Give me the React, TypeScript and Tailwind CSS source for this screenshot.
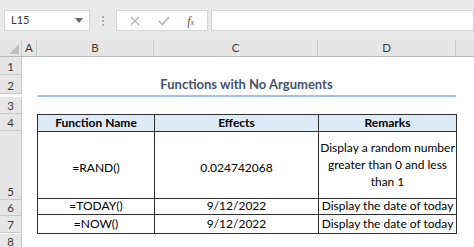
import React from "react";

const font = { fontFamily: "Lato, 'Open Sans', sans-serif" };

function RowHead({ n, h }: { n: string; h: string }) {
  return (
    <div
      className={`w-[22px] shrink-0 ${h} bg-[#e6e6e6] border-r border-b border-[#c9c9c9] flex items-end justify-center text-[11.5px] leading-[15px] text-[#3b3b3b]`}
    >
      {n}
    </div>
  );
}

export default function App() {
  return (
    <div className="w-[474px] h-[247px] overflow-hidden bg-white" style={font}>
      {/* formula bar */}
      <div className="h-[40px] bg-[#e9e9e9] pt-[10px] flex">
        <div className="ml-[4px] w-[86px] h-[21px] bg-white border border-[#d4d4d4] flex items-center justify-between px-[6px] text-[11px] text-[#333]">
          <span>L15</span>
          <svg width="8" height="5" viewBox="0 0 8 5">
            <path d="M0 0 L8 0 L4 5 Z" fill="#666" />
          </svg>
        </div>
        <div className="w-[26px] h-[21px] flex flex-col items-center justify-center gap-[2px]">
          <span className="w-[2px] h-[2px] bg-[#aaa]" />
          <span className="w-[2px] h-[2px] bg-[#aaa]" />
          <span className="w-[2px] h-[2px] bg-[#aaa]" />
        </div>
        <div className="w-[92px] h-[21px] bg-white border border-[#d4d4d4] flex items-center justify-around px-[4px]">
          <svg width="10" height="10" viewBox="0 0 10 10">
            <path d="M1 1 L9 9 M9 1 L1 9" stroke="#b4b4b4" strokeWidth="1.4" />
          </svg>
          <svg width="12" height="10" viewBox="0 0 12 10">
            <path d="M1 5 L4.5 8.5 L11 1" stroke="#b4b4b4" strokeWidth="1.6" fill="none" />
          </svg>
          <span
            className="text-[12px] italic text-[#555] leading-none"
            style={{ fontFamily: "'Liberation Serif', serif" }}
          >
            f<span className="text-[8px]">x</span>
          </span>
        </div>
        <div className="ml-[3px] flex-1 h-[21px] bg-white border border-[#d4d4d4]" />
      </div>

      {/* column headers */}
      <div className="h-[17px] flex bg-[#e6e6e6] border-b border-[#b9b9b9] text-[11.5px] text-[#3b3b3b]">
        <div className="w-[22px] shrink-0 border-r border-[#c9c9c9] flex items-end justify-end p-[2px]">
          <svg width="10" height="10" viewBox="0 0 10 10">
            <path d="M10 0 L10 10 L0 10 Z" fill="#bdbdbd" />
          </svg>
        </div>
        <div className="w-[15px] shrink-0 border-r border-[#c9c9c9] flex items-center justify-center">A</div>
        <div className="w-[117px] shrink-0 border-r border-[#c9c9c9] flex items-center justify-center">B</div>
        <div className="w-[164px] shrink-0 border-r border-[#c9c9c9] flex items-center justify-center">C</div>
        <div className="w-[138px] shrink-0 border-r border-[#c9c9c9] flex items-center justify-center">D</div>
        <div className="flex-1" />
      </div>

      {/* row 1 */}
      <div className="flex">
        <RowHead n="1" h="h-[18px]" />
      </div>
      {/* row 2 */}
      <div className="flex">
        <RowHead n="2" h="h-[19px]" />
        <div className="ml-[15px] w-[419px] border-b-2 border-[#9dc3e6] flex items-center justify-center text-[13px] font-bold text-[#44546a]">
          Functions with No Arguments
        </div>
      </div>
      {/* row 3 */}
      <div className="flex">
        <RowHead n="3" h="h-[17px]" />
      </div>
      {/* table */}
      <div className="flex text-[12px] text-black">
        <div className="flex flex-col">
          <RowHead n="4" h="h-[17px]" />
          <RowHead n="5" h="h-[69px]" />
          <RowHead n="6" h="h-[16px]" />
          <RowHead n="7" h="h-[17px]" />
        </div>
        <div className="ml-[15px] w-[420px] h-[120px] border border-[#2e2e2e] flex flex-col">
          <div className="h-[17px] flex bg-[#ddebf7] border-b border-[#2e2e2e] font-bold">
            <div className="w-[117px] border-r border-[#2e2e2e] flex items-center justify-center">Function Name</div>
            <div className="w-[164px] border-r border-[#2e2e2e] flex items-center justify-center">Effects</div>
            <div className="flex-1 flex items-center justify-center">Remarks</div>
          </div>
          <div className="h-[69px] flex border-b border-[#2e2e2e]">
            <div className="w-[117px] border-r border-[#2e2e2e] flex items-center justify-center pt-[6px]">=RAND()</div>
            <div className="w-[164px] border-r border-[#2e2e2e] flex items-center justify-center pt-[6px]">0.024742068</div>
            <div className="flex-1 flex items-center justify-center text-center leading-[17px] whitespace-nowrap">
              Display a random number
              <br />
              greater than 0 and less
              <br />
              than 1
            </div>
          </div>
          <div className="h-[16px] flex border-b border-[#2e2e2e]">
            <div className="w-[117px] border-r border-[#2e2e2e] flex items-center justify-center">=TODAY()</div>
            <div className="w-[164px] border-r border-[#2e2e2e] flex items-center justify-center">9/12/2022</div>
            <div className="flex-1 flex items-center justify-center whitespace-nowrap">Display the date of today</div>
          </div>
          <div className="flex-1 flex">
            <div className="w-[117px] border-r border-[#2e2e2e] flex items-center justify-center">=NOW()</div>
            <div className="w-[164px] border-r border-[#2e2e2e] flex items-center justify-center">9/12/2022</div>
            <div className="flex-1 flex items-center justify-center whitespace-nowrap">Display the date of today</div>
          </div>
        </div>
      </div>
      {/* row 8 */}
      <div className="flex">
        <RowHead n="8" h="h-[16px]" />
      </div>
    </div>
  );
}
